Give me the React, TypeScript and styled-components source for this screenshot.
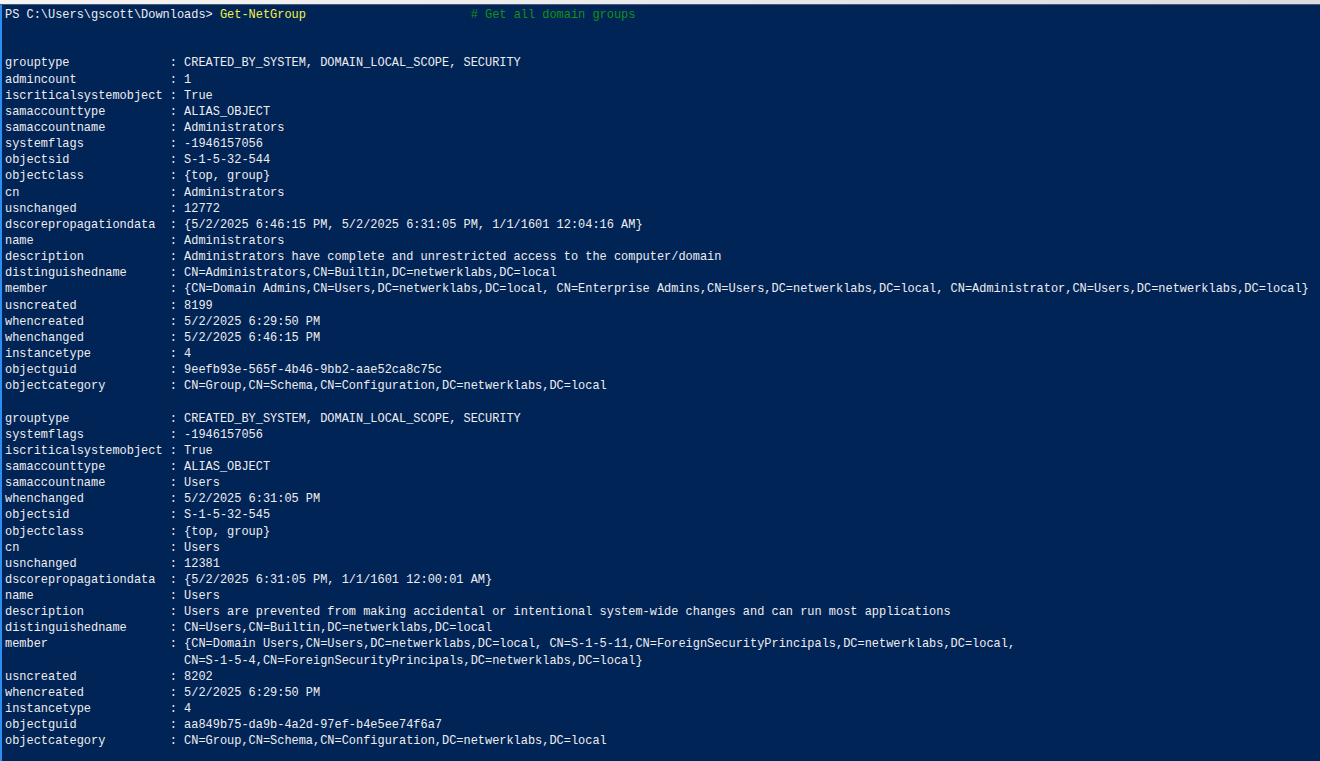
import React from "react";
import styled, { createGlobalStyle } from "styled-components";

const Global = createGlobalStyle`
  html, body { margin: 0; padding: 0; background: #012456; overflow: hidden; }
  #root { width: 1320px; height: 761px; }
`;

const Window = styled.div`
  width: 1320px;
  height: 761px;
  display: flex;
  flex-direction: column;
  background: #012456;
  overflow: hidden;
`;

const TitleEdge = styled.div`
  height: 4px;
  flex: none;
  background: linear-gradient(to right, #f4f4f4 0%, #ececec 40%, #dcdcdc 100%);
  border-bottom: 1px solid #4a5a78;
`;

const Console = styled.pre`
  flex: 1;
  margin: 0;
  padding: 2px 0 0 3px;
  border-left: 2px solid #2f8ff0;
  font-family: "Liberation Mono", "DejaVu Sans Mono", monospace;
  font-size: 11.95px;
  line-height: 16.15px;
  color: #eeedf0;
  white-space: pre;
  overflow: hidden;
`;

const Line = styled.div`
  height: 16.15px;
`;

const Command = styled.span`
  color: #f5f046;
`;

const Comment = styled.span`
  color: #139214;
`;

type Rec = [string, string | string[]][];

const KEYW = 23;

const block1: Rec = [
  ["grouptype", "CREATED_BY_SYSTEM, DOMAIN_LOCAL_SCOPE, SECURITY"],
  ["admincount", "1"],
  ["iscriticalsystemobject", "True"],
  ["samaccounttype", "ALIAS_OBJECT"],
  ["samaccountname", "Administrators"],
  ["systemflags", "-1946157056"],
  ["objectsid", "S-1-5-32-544"],
  ["objectclass", "{top, group}"],
  ["cn", "Administrators"],
  ["usnchanged", "12772"],
  ["dscorepropagationdata", "{5/2/2025 6:46:15 PM, 5/2/2025 6:31:05 PM, 1/1/1601 12:04:16 AM}"],
  ["name", "Administrators"],
  ["description", "Administrators have complete and unrestricted access to the computer/domain"],
  ["distinguishedname", "CN=Administrators,CN=Builtin,DC=netwerklabs,DC=local"],
  ["member", "{CN=Domain Admins,CN=Users,DC=netwerklabs,DC=local, CN=Enterprise Admins,CN=Users,DC=netwerklabs,DC=local, CN=Administrator,CN=Users,DC=netwerklabs,DC=local}"],
  ["usncreated", "8199"],
  ["whencreated", "5/2/2025 6:29:50 PM"],
  ["whenchanged", "5/2/2025 6:46:15 PM"],
  ["instancetype", "4"],
  ["objectguid", "9eefb93e-565f-4b46-9bb2-aae52ca8c75c"],
  ["objectcategory", "CN=Group,CN=Schema,CN=Configuration,DC=netwerklabs,DC=local"],
];

const block2: Rec = [
  ["grouptype", "CREATED_BY_SYSTEM, DOMAIN_LOCAL_SCOPE, SECURITY"],
  ["systemflags", "-1946157056"],
  ["iscriticalsystemobject", "True"],
  ["samaccounttype", "ALIAS_OBJECT"],
  ["samaccountname", "Users"],
  ["whenchanged", "5/2/2025 6:31:05 PM"],
  ["objectsid", "S-1-5-32-545"],
  ["objectclass", "{top, group}"],
  ["cn", "Users"],
  ["usnchanged", "12381"],
  ["dscorepropagationdata", "{5/2/2025 6:31:05 PM, 1/1/1601 12:00:01 AM}"],
  ["name", "Users"],
  ["description", "Users are prevented from making accidental or intentional system-wide changes and can run most applications"],
  ["distinguishedname", "CN=Users,CN=Builtin,DC=netwerklabs,DC=local"],
  ["member", [
    "{CN=Domain Users,CN=Users,DC=netwerklabs,DC=local, CN=S-1-5-11,CN=ForeignSecurityPrincipals,DC=netwerklabs,DC=local,",
    "CN=S-1-5-4,CN=ForeignSecurityPrincipals,DC=netwerklabs,DC=local}",
  ]],
  ["usncreated", "8202"],
  ["whencreated", "5/2/2025 6:29:50 PM"],
  ["instancetype", "4"],
  ["objectguid", "aa849b75-da9b-4a2d-97ef-b4e5ee74f6a7"],
  ["objectcategory", "CN=Group,CN=Schema,CN=Configuration,DC=netwerklabs,DC=local"],
];

function renderBlock(rec: Rec, prefix: string) {
  const out: React.ReactNode[] = [];
  rec.forEach(([k, v], i) => {
    const vals = Array.isArray(v) ? v : [v];
    vals.forEach((val, j) => {
      const lead = j === 0 ? k.padEnd(KEYW, " ") + ": " : " ".repeat(KEYW + 2);
      out.push(<Line key={`${prefix}-${i}-${j}`}>{lead + val}</Line>);
    });
  });
  return out;
}

export default function App() {
  return (
    <>
      <Global />
      <Window>
        <TitleEdge />
        <Console>
          <Line>
            {"PS C:\\Users\\gscott\\Downloads> "}
            <Command>Get-NetGroup</Command>
            {" ".repeat(23)}
            <Comment># Get all domain groups</Comment>
          </Line>
          <Line />
          <Line />
          {renderBlock(block1, "a")}
          <Line />
          {renderBlock(block2, "b")}
        </Console>
      </Window>
    </>
  );
}
